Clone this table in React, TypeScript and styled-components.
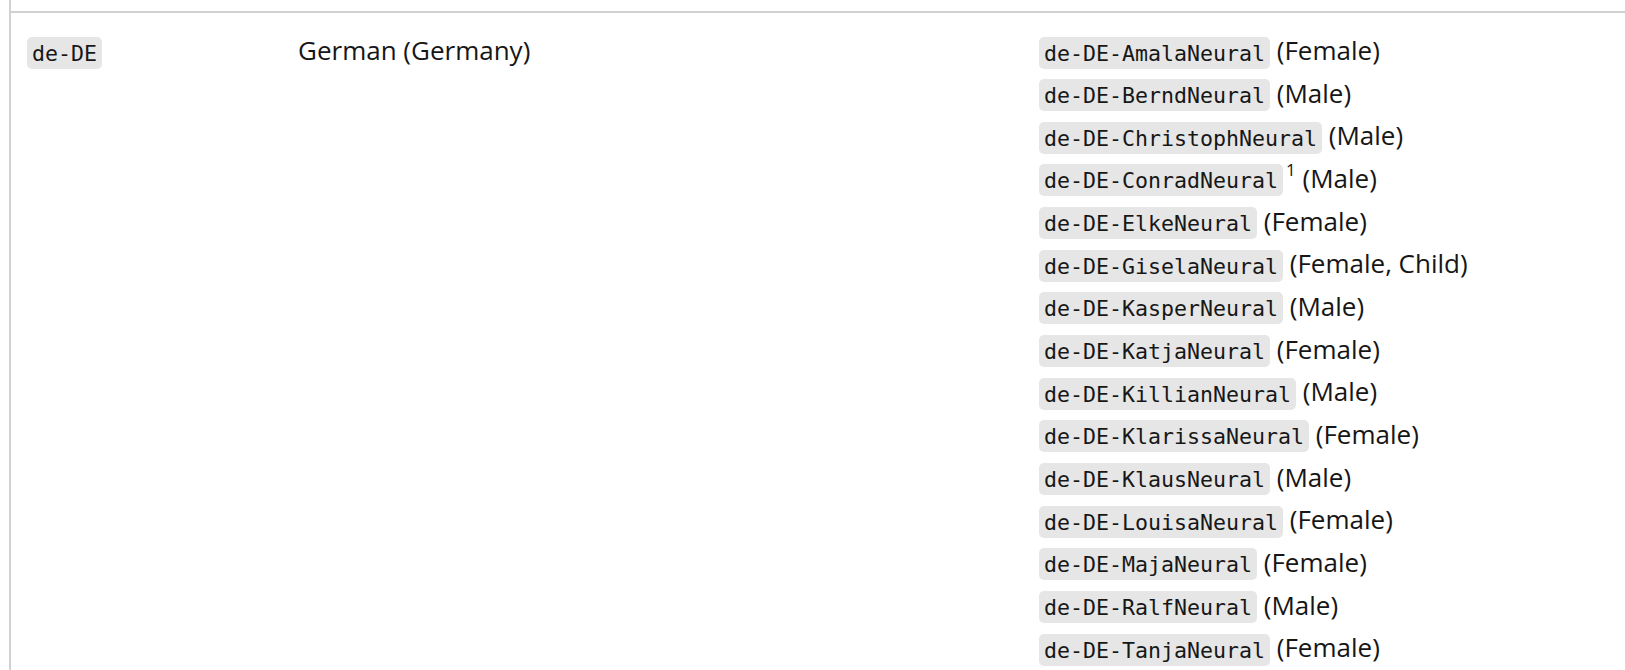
import React from "react";
import styled, { createGlobalStyle } from "styled-components";

const GlobalStyle = createGlobalStyle`
  html, body {
    margin: 0;
    padding: 0;
    background: #ffffff;
    overflow: hidden;
  }
  body {
    font-family: "Open Sans", "Noto Sans", sans-serif;
    color: #161616;
  }
`;

const Page = styled.div`
  padding-left: 9px;
  height: 670px;
  overflow: hidden;
`;

const Table = styled.div`
  border-left: 2px solid #d1d1d1;
  min-height: 670px;
`;

const HeaderEdge = styled.div`
  height: 11px;
  border-bottom: 2px solid #d1d1d1;
`;

const Row = styled.div`
  display: grid;
  grid-template-columns: 271px 741px 1fr;
`;

const Cell = styled.div`
  padding: 16px 16px 16px 16px;
  font-size: 26px;
  line-height: 42.67px;
`;

const Code = styled.code`
  font-family: "DejaVu Sans Mono", "Liberation Mono", monospace;
  font-size: 21.6px;
  line-height: 1;
  background: #e6e6e6;
  color: #171717;
  border-radius: 5px;
  padding: 3.5px 5px;
  letter-spacing: 0;
`;

const VoiceList = styled.div`
  display: flex;
  flex-direction: column;
`;

const VoiceLine = styled.div`
  white-space: nowrap;
  height: 42.67px;
`;

const Note = styled.sup`
  font-size: 17px;
  line-height: 0;
  margin-left: 3px;
  vertical-align: 12px;
`;

type Voice = { name: string; desc: string; note?: string };

const voices: Voice[] = [
  { name: "de-DE-AmalaNeural", desc: "Female" },
  { name: "de-DE-BerndNeural", desc: "Male" },
  { name: "de-DE-ChristophNeural", desc: "Male" },
  { name: "de-DE-ConradNeural", desc: "Male", note: "1" },
  { name: "de-DE-ElkeNeural", desc: "Female" },
  { name: "de-DE-GiselaNeural", desc: "Female, Child" },
  { name: "de-DE-KasperNeural", desc: "Male" },
  { name: "de-DE-KatjaNeural", desc: "Female" },
  { name: "de-DE-KillianNeural", desc: "Male" },
  { name: "de-DE-KlarissaNeural", desc: "Female" },
  { name: "de-DE-KlausNeural", desc: "Male" },
  { name: "de-DE-LouisaNeural", desc: "Female" },
  { name: "de-DE-MajaNeural", desc: "Female" },
  { name: "de-DE-RalfNeural", desc: "Male" },
  { name: "de-DE-TanjaNeural", desc: "Female" },
];

export default function App() {
  return (
    <>
      <GlobalStyle />
      <Page>
        <Table>
          <HeaderEdge />
          <Row>
            <Cell>
              <Code>de-DE</Code>
            </Cell>
            <Cell>German (Germany)</Cell>
            <Cell>
              <VoiceList>
                {voices.map((v) => (
                  <VoiceLine key={v.name}>
                    <Code>{v.name}</Code>
                    {v.note && <Note>{v.note}</Note>} ({v.desc})
                  </VoiceLine>
                ))}
              </VoiceList>
            </Cell>
          </Row>
        </Table>
      </Page>
    </>
  );
}
